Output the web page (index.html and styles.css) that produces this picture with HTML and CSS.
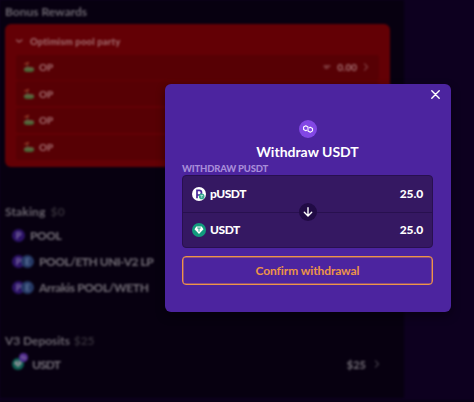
FILE: index.html
```html
<!DOCTYPE html>
<html lang="en">
<head>
  <meta charset="UTF-8" />
  <meta name="viewport" content="width=device-width, initial-scale=1" />
  <title>Withdraw USDT</title>
  <link rel="stylesheet" href="styles.css">
</head>
<body>
  <!-- Shared icons -->
  <svg class="defs" width="0" height="0">
    <symbol id="op" viewBox="0 0 12 12">
      <path d="M4.5 6V1" stroke="#5b4a35" stroke-width="1" />
      <path d="M1.5 2.2L6 .8v2L1.5 4z" fill="#943523" />
      <ellipse cx="6" cy="8.5" rx="5.2" ry="2.6" fill="#4a6636" />
      <path d="M1.5 7.2h9" stroke="#796650" stroke-width="1.2" />
    </symbol>
    <symbol id="polygon" viewBox="0 0 18 18">
      <circle cx="9" cy="9" r="9" fill="#8247e5" />
      <path d="M8 10.1l-1.2.6-2.2-1.2V7L6.8 5.8 9 7v3.9l2.3 1.3 2.2-1.3V8.5l-2.2-1.2-1.2.6" fill="none" stroke="#fff" stroke-width="1.1" stroke-linejoin="round" />
    </symbol>
    <symbol id="tether" viewBox="0 0 14 14">
      <circle cx="7" cy="7" r="7" fill="#129b7d" />
      <path d="M4.3 3.4h5.4l1.8 2.8L7 10.9 2.5 6.2z" fill="#fff" />
      <path d="M5.2 5h3.6M7 5v3.6" stroke="#129b7d" stroke-width=".9" />
    </symbol>
  </svg>

  <div class="page">
    <main class="account">
      <h2 class="heading bonus">Bonus Rewards</h2>
      <section class="rewards">
        <div class="rewards-title">
          <svg width="8" height="8" viewBox="0 0 8 8"><path d="M1.5 3L4 5l3-2" /></svg>
          <span>Optimism pool party</span>
        </div>
        <div class="reward">
          <svg class="op"><use href="#op" /></svg>
          <span>OP</span>
          <span class="reward-value">
            <svg width="8" height="8" viewBox="0 0 8 8"><path d="M1 3h6M2 5h3" /></svg>
            <b>0.00</b>
            <svg class="chevron" width="6" height="8" viewBox="0 0 6 8"><path d="M1.5 .8L4.5 4l-3 3.2" /></svg>
          </span>
        </div>
        <div class="reward"><svg class="op"><use href="#op" /></svg><span>OP</span></div>
        <div class="reward"><svg class="op"><use href="#op" /></svg><span>OP</span></div>
        <div class="reward"><svg class="op"><use href="#op" /></svg><span>OP</span></div>
      </section>

      <h2 class="heading staking">Staking <span>$0</span></h2>
      <ul class="tokens">
        <li><i class="coin">P</i><span class="pool">POOL</span></li>
        <li><i class="coin">P</i><i class="coin eth">E</i><span class="uni">POOL/ETH UNI-V2 LP</span></li>
        <li><i class="coin">P</i><i class="coin eth">E</i><span class="arrakis">Arrakis POOL/WETH</span></li>
      </ul>

      <h2 class="heading deposits">V3 Deposits <span>$25</span></h2>
      <div class="deposit">
        <span class="deposit-icon">
          <svg width="12" height="12"><use href="#tether" /></svg>
          <svg class="network" width="9" height="9"><use href="#polygon" /></svg>
        </span>
        <span class="deposit-name">USDT</span>
        <span class="deposit-value">$25</span>
        <svg class="chevron" width="6" height="8" viewBox="0 0 6 8"><path d="M1.5 .8L4.5 4l-3 3.2" /></svg>
      </div>
    </main>
  </div>

  <!-- Withdraw modal -->
  <div class="overlay">
    <div class="modal">
      <button class="close" aria-label="Close">
        <svg width="9" height="9" viewBox="0 0 9 9"><path d="M.8 .8l7.4 7.4M8.2 .8L.8 8.2" /></svg>
      </button>
      <svg class="modal-icon" width="18" height="18"><use href="#polygon" /></svg>
      <h1>Withdraw USDT</h1>
      <div class="label">WITHDRAW PUSDT</div>
      <div class="amounts">
        <div class="amount">
          <svg width="14" height="14" viewBox="0 0 14 14">
            <circle cx="7" cy="7" r="7" fill="#fff" />
            <path d="M5 11.2V3.4h2.2a2.2 2.2 0 0 1 0 4.6H5" fill="none" stroke="#46279a" stroke-width="1.7" />
            <circle cx="9.7" cy="9.4" r="2.8" fill="#36a88e" />
            <path d="M8.4 8.5h2.6M9.7 8.5v2.3" stroke="#c9eee4" stroke-width=".7" />
          </svg>
          <span>pUSDT</span>
          <b>25.0</b>
        </div>
        <div class="amount">
          <svg width="14" height="14"><use href="#tether" /></svg>
          <span>USDT</span>
          <b>25.0</b>
        </div>
        <div class="arrow">
          <svg width="10" height="10" viewBox="0 0 10 10"><path d="M5 .8v8M1.3 5.2L5 8.9l3.7-3.7" /></svg>
        </div>
      </div>
      <button class="confirm">Confirm withdrawal</button>
    </div>
  </div>
</body>
</html>
```
FILE: styles.css
```css
* { margin: 0; padding: 0; box-sizing: border-box; }

body {
  width: 474px;
  height: 402px;
  overflow: hidden;
  background: #0d001f;
  font-family: Lato, "Liberation Sans", sans-serif;
  font-weight: 900;
}

svg { flex: none; display: block; }
.defs { position: absolute; }

/* Dimmed page behind the modal */
.page {
  height: 402px;
  border-bottom: 1px solid #000;
  filter: blur(0.8px);
}
.account {
  width: 404px;
  height: 398px;
  padding: 4px 14px 0 5px;
  background: #070010;
  color: #6b656f;
}
.page path { stroke-linecap: round; }

.heading {
  height: 16px;
  font-size: 12px;
  line-height: 16px;
  white-space: nowrap;
}
.heading span { color: #332d38; font-weight: 700; margin-left: 1px; }

.rewards {
  height: 143px;
  margin-top: 4px;
  padding: 7px 11px 0;
  border-radius: 6px;
  background: #630005;
  color: #a0686b;
  font-size: 10px;
}
.rewards svg:not(.op), .deposit .chevron {
  fill: none;
  stroke: currentColor;
  stroke-width: 1.2;
}
.rewards-title {
  display: flex;
  align-items: center;
  gap: 7px;
  height: 20px;
  margin-bottom: 3.5px;
}
.rewards-title svg { margin-left: -1px; }
.rewards-title span { font-size: 9.5px; letter-spacing: 0.15px; }
.reward {
  display: flex;
  align-items: center;
  gap: 4px;
  height: 25px;
  margin-bottom: 1.7px;
  padding: 0 10px 0 7px;
  border-radius: 3px;
  background: #570004;
}
.op { width: 12px; height: 12px; }
.reward-value { display: flex; align-items: center; gap: 6px; margin-left: auto; }
.chevron { opacity: 0.6; }

.staking { margin-top: 37px; letter-spacing: 0.15px; }
.staking span { margin-left: 2px; }
.tokens { list-style: none; margin: 3px 0 0 7px; font-size: 12px; }
.tokens li { display: flex; align-items: center; height: 25.8px; }
.tokens span { margin-left: 5px; white-space: nowrap; }
.pool { letter-spacing: -0.5px; }
.uni { letter-spacing: -0.5px; }
.arrakis { letter-spacing: -0.4px; }
.coin {
  width: 13px;
  height: 13px;
  border-radius: 50%;
  background: #2c1367;
  color: #77669d;
  font-size: 9px;
  font-style: normal;
  line-height: 13px;
  text-align: center;
}
.eth { margin-left: -4px; background: #253864; color: #596f96; }

.deposits { margin-top: 33px; letter-spacing: -0.05px; }
.deposit {
  display: flex;
  align-items: center;
  height: 28px;
  margin: 1px 10px 0 7px;
  font-size: 12px;
}
.deposit-icon { position: relative; width: 20px; opacity: 0.6; }
.deposit-name { letter-spacing: -0.9px; }
.network { position: absolute; left: 7px; top: -5px; }
.deposit-value { margin-left: auto; font-size: 11px; }
.deposit .chevron { margin-left: 8px; }

/* Modal */
.overlay {
  position: absolute;
  left: 165px;
  top: 84px;
}
.modal {
  position: relative;
  display: flex;
  flex-direction: column;
  width: 286px;
  height: 228px;
  padding: 36px 18px 0 17px;
  border-radius: 6px;
  background: #4c249f;
  box-shadow: 0 4px 10px rgba(0, 0, 0, 0.4);
  color: #fff;
}
.close {
  position: absolute;
  right: 11px;
  top: 6px;
  border: 0;
  background: none;
}
.close svg, .arrow svg {
  fill: none;
  stroke: #fff;
  stroke-width: 1.4;
  stroke-linecap: round;
  stroke-linejoin: round;
}
.modal-icon { align-self: center; }
h1 {
  height: 20px;
  margin-top: 4px;
  font-size: 14px;
  line-height: 20px;
  text-align: center;
}
.label {
  height: 12px;
  margin-top: 1px;
  color: #a78bd8;
  font-size: 9.5px;
  letter-spacing: -0.2px;
  line-height: 11px;
}
.amounts {
  position: relative;
  border: 1px solid #28104f;
  border-radius: 4px;
  background: #351862;
}
.amount {
  display: flex;
  align-items: center;
  gap: 4px;
  height: 35.5px;
  padding: 0 9px;
  font-size: 12px;
}
.amount + .amount { border-top: 1px solid #28104f; }
.amount span { letter-spacing: -0.45px; }
.amount b { margin-left: auto; letter-spacing: -0.1px; }
.arrow {
  position: absolute;
  left: 116px;
  top: 27px;
  display: grid;
  place-items: center;
  width: 18px;
  height: 18px;
  border-radius: 50%;
  background: #210b45;
}
.confirm {
  height: 29px;
  margin-top: 8px;
  border: 1px solid #ee9448;
  border-radius: 4px;
  box-shadow: inset 0 0 0 0.5px #d57d5c;
  background: none;
  color: #ec9448;
  font: 700 12px Lato, "Liberation Sans", sans-serif;
  letter-spacing: -0.1px;
}
```
